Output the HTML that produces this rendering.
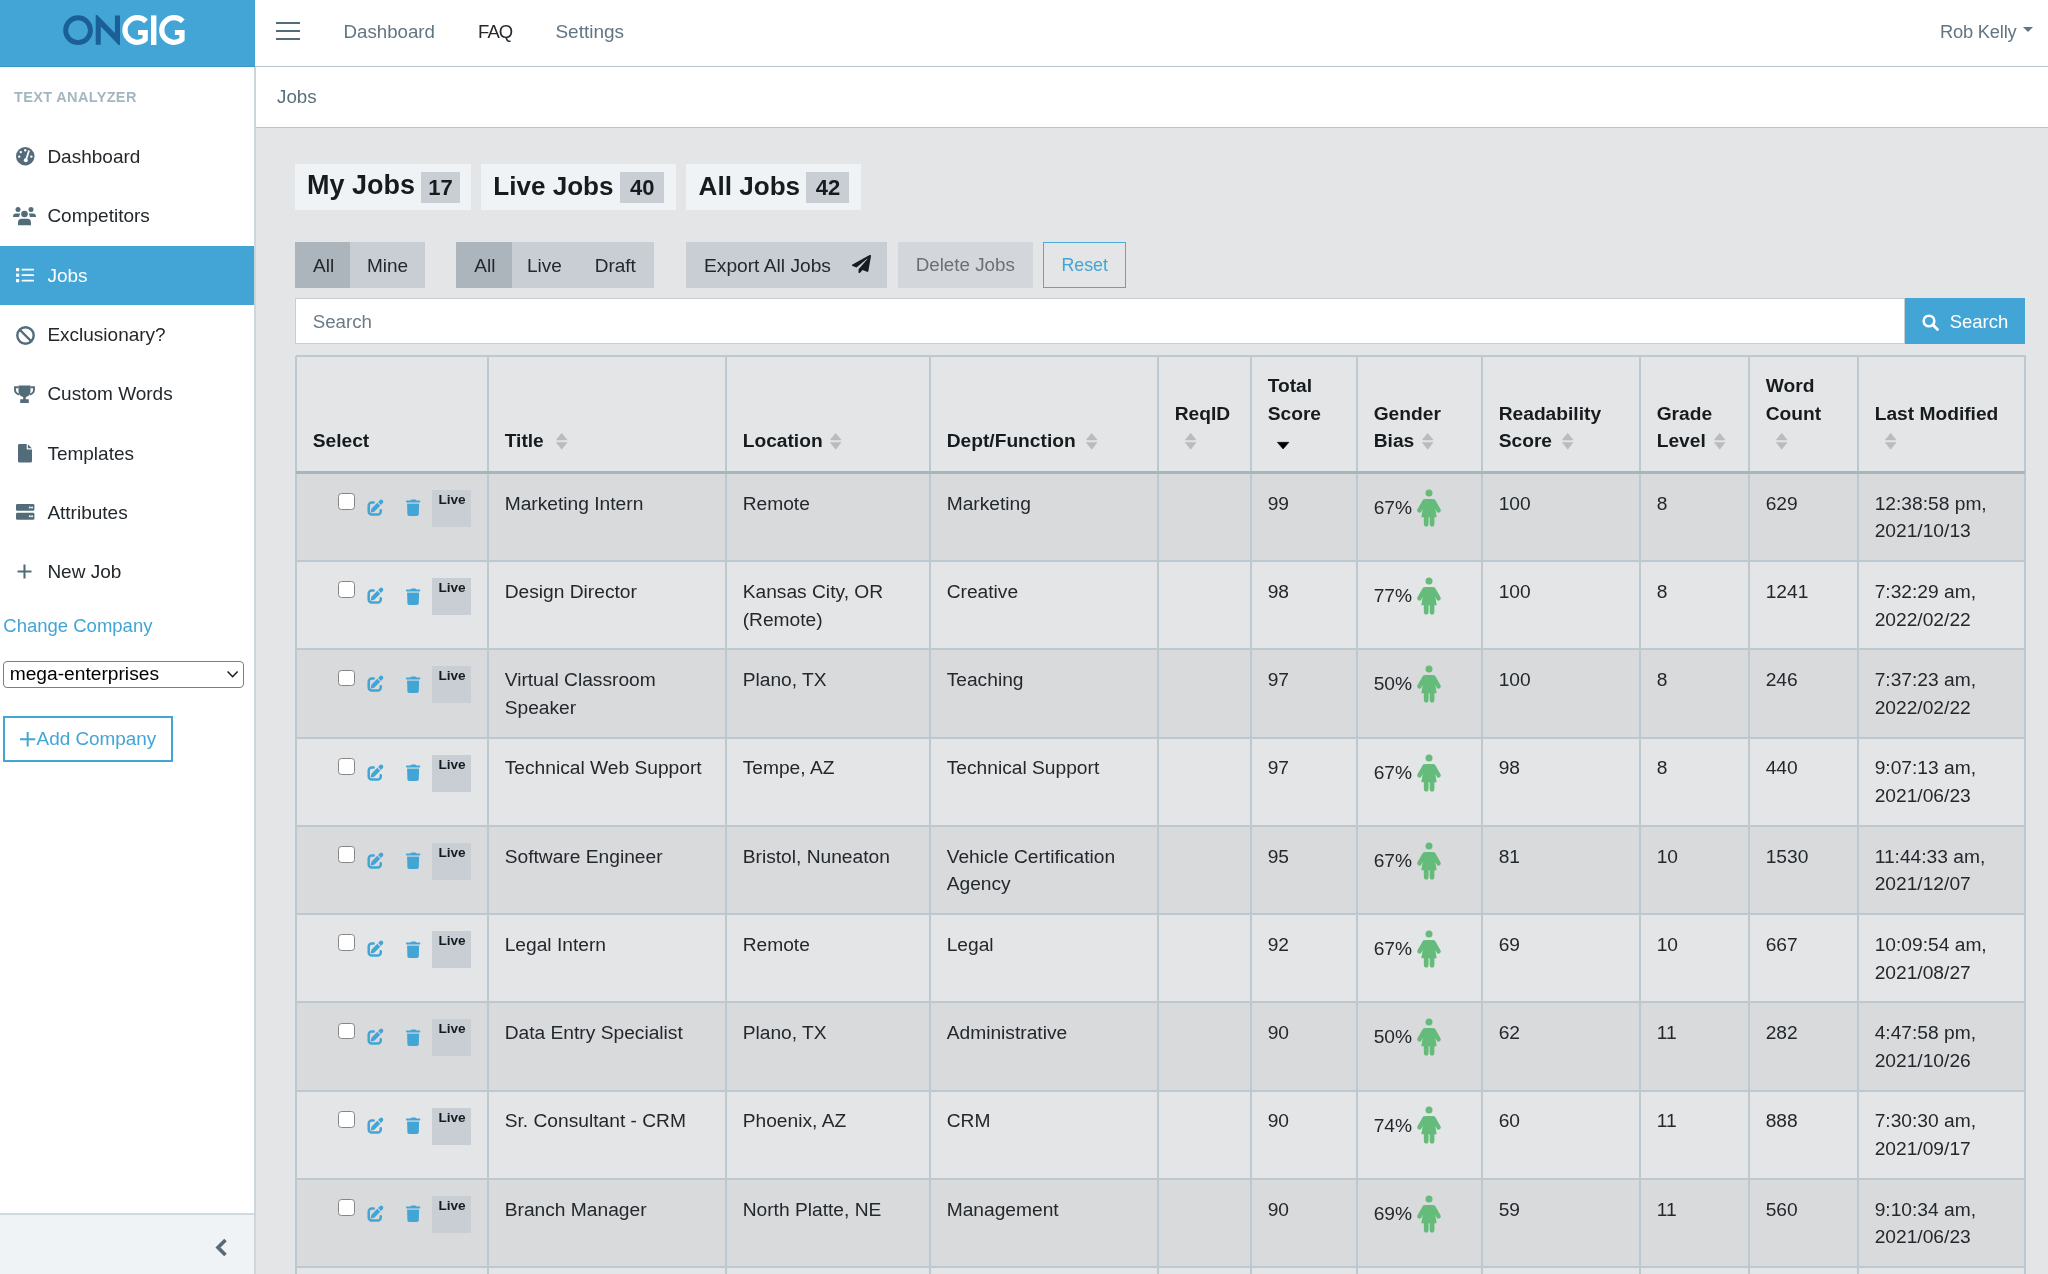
<!DOCTYPE html>
<html><head><meta charset="utf-8"><style>
*{box-sizing:border-box;margin:0;padding:0}
html,body{width:2048px;height:1274px;overflow:hidden}
body{font-family:"Liberation Sans",sans-serif;font-size:18.5px;color:#23282c;background:#e4e5e6;position:relative}
.t{position:absolute;white-space:nowrap;line-height:1}
body{will-change:transform}
.r{position:absolute}
svg{position:absolute;overflow:visible}
</style></head><body>
<div class="r" style="left:0px;top:0px;width:2048px;height:66px;background:#fff;"></div>
<div class="r" style="left:255px;top:66px;width:1793px;height:1px;background:#b9c4cb;"></div>
<div class="r" style="left:0px;top:0px;width:255px;height:67px;background:#42a5d6;"></div>
<div class="r" style="left:0px;top:66px;width:255px;height:1px;background:#3b95c3;"></div>
<svg style="left:0;top:0" width="255" height="66" viewBox="0 0 255 66">
<circle cx="78.05" cy="30.2" r="12.4" fill="none" stroke="#1b5f97" stroke-width="4.95"/>
<path d="M95.7 44.8 V15.1 H97.2 L114.9 32.9 V15.6 H120 V44.9 H118.6 L100.8 26.6 V44.8 Z" fill="#1b5f97"/>
<path d="M147.87 19.43 A14.95 14.95 0 1 0 147.8 40.6 V30.1 H138.1 V35.1 H142.6 V38.1 A9.7 9.7 0 1 1 144.16 23.14 Z" fill="#fff"/>
<path transform="translate(36.8 0)" d="M147.87 19.43 A14.95 14.95 0 1 0 147.8 40.6 V30.1 H138.1 V35.1 H142.6 V38.1 A9.7 9.7 0 1 1 144.16 23.14 Z" fill="#fff"/>
<rect x="151" y="15.4" width="5.4" height="29.6" fill="#fff"/>
</svg>
<div class="r" style="left:276px;top:21.6px;width:24px;height:2.0px;background:#536c79;"></div>
<div class="r" style="left:276px;top:29.6px;width:24px;height:2.0px;background:#536c79;"></div>
<div class="r" style="left:276px;top:38px;width:24px;height:2px;background:#536c79;"></div>
<div class="t" style="left:343.50px;top:22.67px;font-size:18.7px;color:#627583;">Dashboard</div>
<div class="t" style="left:478.00px;top:22.84px;font-size:18.5px;color:#23282c;letter-spacing:-0.9px;">FAQ</div>
<div class="t" style="left:555.40px;top:22.42px;font-size:19px;color:#627583;">Settings</div>
<div class="t" style="left:1940.00px;top:23.01px;font-size:18.3px;color:#627583;letter-spacing:-0.2px;">Rob Kelly</div>
<svg style="left:2023px;top:26.8px" width="10" height="5" viewBox="0 0 10 5"><path d="M0 0H10L5 5Z" fill="#627583"/></svg>
<div class="r" style="left:0px;top:67px;width:255px;height:1207px;background:#fff;"></div>
<div class="r" style="left:254px;top:67px;width:2px;height:1207px;background:#cdd6db;"></div>
<div class="t" style="left:14.00px;top:90.43px;font-size:14.5px;font-weight:700;color:#a4b7c1;letter-spacing:0.35px;">TEXT ANALYZER</div>
<div class="t" style="left:47.40px;top:147.12px;font-size:19px;color:#23282c;">Dashboard</div>
<div class="t" style="left:47.40px;top:206.42px;font-size:19px;color:#23282c;">Competitors</div>
<div class="r" style="left:0px;top:246px;width:254px;height:59px;background:#42a5d6;"></div>
<div class="t" style="left:47.40px;top:265.72px;font-size:19px;color:#fff;">Jobs</div>
<div class="t" style="left:47.40px;top:325.02px;font-size:19px;color:#23282c;">Exclusionary?</div>
<div class="t" style="left:47.40px;top:384.32px;font-size:19px;color:#23282c;">Custom Words</div>
<div class="t" style="left:47.40px;top:443.62px;font-size:19px;color:#23282c;">Templates</div>
<div class="t" style="left:47.40px;top:502.92px;font-size:19px;color:#23282c;">Attributes</div>
<div class="t" style="left:47.40px;top:562.22px;font-size:19px;color:#23282c;">New Job</div>
<svg style="left:15.8px;top:147.4px" width="18.5" height="18.5" viewBox="0 0 18.5 18.5">
<circle cx="9.25" cy="9.25" r="9.25" fill="#536c79"/>
<circle cx="9.25" cy="3.3" r="1.2" fill="#fff"/><circle cx="4.8" cy="5.1" r="1.2" fill="#fff"/><circle cx="3.2" cy="9.6" r="1.2" fill="#fff"/><circle cx="15.3" cy="9.6" r="1.2" fill="#fff"/>
<path d="M12.8 4.2 L10.3 12" stroke="#fff" stroke-width="1.8" stroke-linecap="round"/>
<circle cx="9.8" cy="13.2" r="2" fill="#fff"/>
</svg>
<svg style="left:13.1px;top:206.8px" width="23" height="18.5" viewBox="0 0 23 18.5">
<circle cx="5" cy="2.6" r="2.5" fill="#536c79"/><circle cx="18" cy="2.6" r="2.5" fill="#536c79"/>
<path d="M0 10 Q0 6.6 3 6.6 H7.5 Q6.2 8 6.2 10 Z" fill="#536c79"/>
<path d="M23 10 Q23 6.6 20 6.6 H15.5 Q16.8 8 16.8 10 Z" fill="#536c79"/>
<circle cx="11.5" cy="7" r="3.3" fill="#536c79"/>
<path d="M5 18.3 V15.8 Q5 11.8 8.6 11.8 H14.4 Q18 11.8 18 15.8 V18.3 Z" fill="#536c79"/>
</svg>
<svg style="left:16.2px;top:267.8px" width="18.5" height="15" viewBox="0 0 18.5 15">
<rect x="0" y="0" width="3.2" height="3.2" rx="0.6" fill="#fff"/><rect x="0" y="5.6" width="3.2" height="3.2" rx="0.6" fill="#fff"/><rect x="0" y="11.1" width="3.2" height="3.2" rx="0.6" fill="#fff"/>
<rect x="5.6" y="0.8" width="12.4" height="1.8" rx="0.5" fill="#fff"/><rect x="5.6" y="6.3" width="12.4" height="1.8" rx="0.5" fill="#fff"/><rect x="5.6" y="11.8" width="12.4" height="1.8" rx="0.5" fill="#fff"/>
</svg>
<svg style="left:15.6px;top:325.6px" width="19" height="19" viewBox="0 0 19 19">
<circle cx="9.5" cy="9.5" r="8.2" fill="none" stroke="#536c79" stroke-width="2.4"/>
<path d="M4 4 L15 15" stroke="#536c79" stroke-width="2.4"/>
</svg>
<svg style="left:14.3px;top:384.6px" width="21" height="18.5" viewBox="0 0 21 18.5">
<path d="M4.5 0.5 H16.5 V6 Q16.5 11 11.8 12 V14.2 H14.8 V18 H6.2 V14.2 H9.2 V12 Q4.5 11 4.5 6Z" fill="#536c79"/>
<path d="M4.6 2.2 H1 V4.6 Q1 8.6 5.2 9.6" fill="none" stroke="#536c79" stroke-width="1.9"/>
<path d="M16.4 2.2 H20 V4.6 Q20 8.6 15.8 9.6" fill="none" stroke="#536c79" stroke-width="1.9"/>
</svg>
<svg style="left:18px;top:444px" width="14" height="18.6" viewBox="0 0 14.5 19" preserveAspectRatio="none">
<path d="M1.5 0 H9 V4.8 Q9 5.5 9.7 5.5 H14.5 V17.5 Q14.5 19 13 19 H1.5 Q0 19 0 17.5 V1.5 Q0 0 1.5 0Z" fill="#536c79"/>
<path d="M10.2 0.2 L14.3 4.3 H10.2Z" fill="#536c79"/>
</svg>
<svg style="left:16px;top:504.2px" width="18.4" height="16" viewBox="0 0 19.5 17" preserveAspectRatio="none">
<rect x="0" y="0" width="19.5" height="7.3" rx="1.4" fill="#536c79"/>
<rect x="0" y="9.4" width="19.5" height="7.3" rx="1.4" fill="#536c79"/>
<circle cx="14.6" cy="3.65" r="1" fill="#fff"/><circle cx="17" cy="3.65" r="1" fill="#fff"/>
<circle cx="14.6" cy="13.05" r="1" fill="#fff"/><circle cx="17" cy="13.05" r="1" fill="#fff"/>
</svg>
<svg style="left:17px;top:563.5px" width="15" height="15" viewBox="0 0 15 15">
<path d="M7.5 0.5V14.5M0.5 7.5H14.5" stroke="#536c79" stroke-width="2.1"/>
</svg>
<div class="t" style="left:3.30px;top:616.84px;font-size:18.5px;color:#42a5d6;">Change Company</div>
<div class="r" style="left:3px;top:661px;width:240.5px;height:26.7px;border:1.6px solid #7d7d7d;border-radius:4px;background:#fff"></div>
<div class="t" style="left:9.70px;top:663.95px;font-size:19.2px;color:#000;">mega-enterprises</div>
<svg style="left:226.8px;top:670.9px" width="11.2" height="6.7" viewBox="0 0 11.2 6.7"><path d="M0.6 0.6L5.6 5.8L10.6 0.6" fill="none" stroke="#1a1a1a" stroke-width="1.5"/></svg>
<div class="r" style="left:2.7px;top:716px;width:170px;height:45.8px;border:2px solid #42a5d6"></div>
<svg style="left:20.1px;top:731.9px" width="15.3" height="14.4" viewBox="0 0 15.3 14.4"><path d="M7.65 0V14.4M0 7.2H15.3" stroke="#42a5d6" stroke-width="2"/></svg>
<div class="t" style="left:36.60px;top:729.90px;font-size:18.9px;color:#42a5d6;">Add Company</div>
<div class="r" style="left:0px;top:1213px;width:254px;height:61px;background:#f0f3f5;"></div>
<div class="r" style="left:0px;top:1213px;width:254px;height:2px;background:#cfd9de;"></div>
<svg style="left:215px;top:1238px" width="13" height="19" viewBox="0 0 13 19"><path d="M10.5 2L3 9.5L10.5 17" fill="none" stroke="#536c79" stroke-width="3.6"/></svg>
<div class="r" style="left:256px;top:67px;width:1792px;height:60px;background:#fff;"></div>
<div class="r" style="left:256px;top:127px;width:1792px;height:1px;background:#b9c4cb;"></div>
<div class="t" style="left:277.00px;top:87.89px;font-size:18.8px;color:#5c6f7c;">Jobs</div>
<div class="r" style="left:295px;top:164px;width:176px;height:46px;background:#f0f3f5;"></div>
<div class="t" style="left:307.00px;top:172.44px;font-size:27px;font-weight:700;color:#151b1e;">My Jobs</div>
<div class="r" style="left:421px;top:172px;width:39px;height:31px;background:#c8ced3;"></div>
<div class="t" style="left:421px;width:39px;text-align:center;top:176.68px;font-size:22px;font-weight:700;color:#151b1e">17</div>
<div class="r" style="left:481px;top:164px;width:195px;height:46px;background:#f0f3f5;"></div>
<div class="t" style="left:493.20px;top:173.21px;font-size:26.1px;font-weight:700;color:#151b1e;">Live Jobs</div>
<div class="r" style="left:620.3px;top:172px;width:43.700000000000045px;height:31px;background:#c8ced3;"></div>
<div class="t" style="left:620.3px;width:43.700000000000045px;text-align:center;top:176.68px;font-size:22px;font-weight:700;color:#151b1e">40</div>
<div class="r" style="left:686px;top:164px;width:174.5px;height:46px;background:#f0f3f5;"></div>
<div class="t" style="left:698.60px;top:173.21px;font-size:26.1px;font-weight:700;color:#151b1e;">All Jobs</div>
<div class="r" style="left:806.3px;top:172px;width:43.200000000000045px;height:31px;background:#c8ced3;"></div>
<div class="t" style="left:806.3px;width:43.200000000000045px;text-align:center;top:176.68px;font-size:22px;font-weight:700;color:#151b1e">42</div>
<div class="r" style="left:295px;top:242px;width:55px;height:46px;background:#acb4bc;"></div>
<div class="r" style="left:350px;top:242px;width:74.5px;height:46px;background:#c8ced3;"></div>
<div class="t" style="left:313.00px;top:255.92px;font-size:19px;">All</div>
<div class="t" style="left:367.00px;top:255.92px;font-size:19px;">Mine</div>
<div class="r" style="left:456.3px;top:242px;width:55.30000000000001px;height:46px;background:#acb4bc;"></div>
<div class="r" style="left:511.6px;top:242px;width:142.89999999999998px;height:46px;background:#c8ced3;"></div>
<div class="t" style="left:474.30px;top:255.92px;font-size:19px;">All</div>
<div class="t" style="left:527.00px;top:255.92px;font-size:19px;">Live</div>
<div class="t" style="left:594.70px;top:255.92px;font-size:19px;">Draft</div>
<div class="r" style="left:686px;top:242px;width:201px;height:46px;background:#c8ced3;"></div>
<div class="t" style="left:704.00px;top:255.75px;font-size:19.2px;">Export All Jobs</div>
<svg style="left:851.5px;top:255px" width="19" height="18" viewBox="0 0 512 512" preserveAspectRatio="none"><path d="M476 3.2L12.5 270.6c-18.1 10.4-15.8 35.6 2.2 43.2L121 358.4l287.3-253.2c5.5-4.9 13.3 2.6 8.6 8.3L176 407v80.5c0 23.6 28.5 32.9 42.5 15.8L282 426l124.6 52.2c14.2 6 30.4-2.9 33-18.2l72-432C515 7.8 493.3-6.8 476 3.2z" fill="#151b1e"/></svg>
<div class="r" style="left:898px;top:242px;width:134.70000000000005px;height:46px;background:#d3d6da;"></div>
<div class="t" style="left:915.70px;top:256.09px;font-size:18.8px;color:#6c7075;">Delete Jobs</div>
<div class="r" style="left:1043px;top:242px;width:83.3px;height:46px;border:1.7px solid #4aabd8"></div>
<div class="t" style="left:1061.50px;top:256.93px;font-size:17.8px;color:#42a5d6;">Reset</div>
<div class="r" style="left:295px;top:298px;width:1610px;height:46px;background:#fff;border:1px solid #c8ced3"></div>
<div class="t" style="left:312.70px;top:312.57px;font-size:18.7px;color:#6a7b88;">Search</div>
<div class="r" style="left:1905px;top:298px;width:120.40000000000009px;height:46px;background:#42a5d6;"></div>
<svg style="left:1922px;top:314px" width="17" height="17" viewBox="0 0 17 17"><circle cx="7" cy="7" r="5.3" fill="none" stroke="#fff" stroke-width="2.6"/><path d="M10.8 10.8L15.5 15.5" stroke="#fff" stroke-width="2.8" stroke-linecap="round"/></svg>
<div class="t" style="left:1949.70px;top:312.54px;font-size:18.5px;color:#fff;">Search</div>
<div class="r" style="left:296px;top:355.5px;width:1729px;height:115.5px;background:#e4e5e6;"></div>
<div class="r" style="left:296px;top:473.0px;width:1729px;height:88.25px;background:#d9dadc;"></div>
<div class="r" style="left:296px;top:561.24px;width:1729px;height:88.25px;background:#e4e5e6;"></div>
<div class="r" style="left:296px;top:649.48px;width:1729px;height:88.25px;background:#d9dadc;"></div>
<div class="r" style="left:296px;top:737.72px;width:1729px;height:88.25px;background:#e4e5e6;"></div>
<div class="r" style="left:296px;top:825.96px;width:1729px;height:88.25px;background:#d9dadc;"></div>
<div class="r" style="left:296px;top:914.2px;width:1729px;height:88.25px;background:#e4e5e6;"></div>
<div class="r" style="left:296px;top:1002.4399999999999px;width:1729px;height:88.25000000000011px;background:#d9dadc;"></div>
<div class="r" style="left:296px;top:1090.6799999999998px;width:1729px;height:88.25px;background:#e4e5e6;"></div>
<div class="r" style="left:296px;top:1178.92px;width:1729px;height:88.25px;background:#d9dadc;"></div>
<div class="t" style="left:312.70px;top:431.45px;font-size:19.2px;font-weight:700;color:#151b1e;">Select</div>
<div class="t" style="left:504.70px;top:431.45px;font-size:19.2px;font-weight:700;color:#151b1e;">Title</div>
<svg style="left:555.9px;top:432.5px" width="11.4" height="16.4" viewBox="0 0 11.4 16.4"><path d="M5.7 0.3L11.1 6.9H0.3Z M0.3 9.4H11.1L5.7 16.2Z" fill="#bbbbbb" stroke="#bbbbbb" stroke-width="0.6" stroke-linejoin="round"/></svg>
<div class="t" style="left:742.70px;top:431.45px;font-size:19.2px;font-weight:700;color:#151b1e;">Location</div>
<svg style="left:830.4px;top:432.5px" width="11.4" height="16.4" viewBox="0 0 11.4 16.4"><path d="M5.7 0.3L11.1 6.9H0.3Z M0.3 9.4H11.1L5.7 16.2Z" fill="#bbbbbb" stroke="#bbbbbb" stroke-width="0.6" stroke-linejoin="round"/></svg>
<div class="t" style="left:946.70px;top:431.45px;font-size:19.2px;font-weight:700;color:#151b1e;">Dept/Function</div>
<svg style="left:1086.3px;top:432.5px" width="11.4" height="16.4" viewBox="0 0 11.4 16.4"><path d="M5.7 0.3L11.1 6.9H0.3Z M0.3 9.4H11.1L5.7 16.2Z" fill="#bbbbbb" stroke="#bbbbbb" stroke-width="0.6" stroke-linejoin="round"/></svg>
<div class="t" style="left:1174.70px;top:403.75px;font-size:19.2px;font-weight:700;color:#151b1e;">ReqID</div>
<svg style="left:1184.7px;top:432.5px" width="11.4" height="16.4" viewBox="0 0 11.4 16.4"><path d="M5.7 0.3L11.1 6.9H0.3Z M0.3 9.4H11.1L5.7 16.2Z" fill="#bbbbbb" stroke="#bbbbbb" stroke-width="0.6" stroke-linejoin="round"/></svg>
<div class="t" style="left:1267.70px;top:376.05px;font-size:19.2px;font-weight:700;color:#151b1e;">Total</div>
<div class="t" style="left:1267.70px;top:403.75px;font-size:19.2px;font-weight:700;color:#151b1e;">Score</div>
<svg style="left:1277.4px;top:441.6px" width="12.2" height="7.3" viewBox="0 0 12.2 7.3"><path d="M0.3 0.3H11.9L6.1 7Z" fill="#000" stroke="#000" stroke-width="0.6" stroke-linejoin="round"/></svg>
<div class="t" style="left:1373.70px;top:403.75px;font-size:19.2px;font-weight:700;color:#151b1e;">Gender</div>
<div class="t" style="left:1373.70px;top:431.45px;font-size:19.2px;font-weight:700;color:#151b1e;">Bias</div>
<svg style="left:1422.4px;top:432.5px" width="11.4" height="16.4" viewBox="0 0 11.4 16.4"><path d="M5.7 0.3L11.1 6.9H0.3Z M0.3 9.4H11.1L5.7 16.2Z" fill="#bbbbbb" stroke="#bbbbbb" stroke-width="0.6" stroke-linejoin="round"/></svg>
<div class="t" style="left:1498.70px;top:403.75px;font-size:19.2px;font-weight:700;color:#151b1e;">Readability</div>
<div class="t" style="left:1498.70px;top:431.45px;font-size:19.2px;font-weight:700;color:#151b1e;">Score</div>
<svg style="left:1562.2px;top:432.5px" width="11.4" height="16.4" viewBox="0 0 11.4 16.4"><path d="M5.7 0.3L11.1 6.9H0.3Z M0.3 9.4H11.1L5.7 16.2Z" fill="#bbbbbb" stroke="#bbbbbb" stroke-width="0.6" stroke-linejoin="round"/></svg>
<div class="t" style="left:1656.70px;top:403.75px;font-size:19.2px;font-weight:700;color:#151b1e;">Grade</div>
<div class="t" style="left:1656.70px;top:431.45px;font-size:19.2px;font-weight:700;color:#151b1e;">Level</div>
<svg style="left:1713.9px;top:432.5px" width="11.4" height="16.4" viewBox="0 0 11.4 16.4"><path d="M5.7 0.3L11.1 6.9H0.3Z M0.3 9.4H11.1L5.7 16.2Z" fill="#bbbbbb" stroke="#bbbbbb" stroke-width="0.6" stroke-linejoin="round"/></svg>
<div class="t" style="left:1765.70px;top:376.05px;font-size:19.2px;font-weight:700;color:#151b1e;">Word</div>
<div class="t" style="left:1765.70px;top:403.75px;font-size:19.2px;font-weight:700;color:#151b1e;">Count</div>
<svg style="left:1775.5px;top:432.5px" width="11.4" height="16.4" viewBox="0 0 11.4 16.4"><path d="M5.7 0.3L11.1 6.9H0.3Z M0.3 9.4H11.1L5.7 16.2Z" fill="#bbbbbb" stroke="#bbbbbb" stroke-width="0.6" stroke-linejoin="round"/></svg>
<div class="t" style="left:1874.70px;top:403.75px;font-size:19.2px;font-weight:700;color:#151b1e;">Last Modified</div>
<svg style="left:1884.7px;top:432.5px" width="11.4" height="16.4" viewBox="0 0 11.4 16.4"><path d="M5.7 0.3L11.1 6.9H0.3Z M0.3 9.4H11.1L5.7 16.2Z" fill="#bbbbbb" stroke="#bbbbbb" stroke-width="0.6" stroke-linejoin="round"/></svg>
<div class="r" style="left:338px;top:493.10px;width:17px;height:16.8px;background:#fff;border:1.7px solid #858585;border-radius:3.5px"></div>
<svg style="left:367px;top:499px" width="18" height="18" viewBox="0 0 18 18"><path d="M6.7 3.45 H4.71 A3 3 0 0 0 1.71 6.45 V12.45 A3 3 0 0 0 4.71 15.45 H10.75 A3 3 0 0 0 13.75 12.45 V11.2" fill="none" stroke="#42a5d6" stroke-width="2.5" stroke-linecap="round"/><path d="M4.61 9.41 L10.3 3.7 L13.3 6.7 L7.58 12.38 Q6 13.3 3.7 13.5 Q3.7 11.2 4.61 9.41Z" fill="#42a5d6"/><path d="M11.1 3 L12.8 1.3 A2.05 2.05 0 0 1 15.7 4.2 L14 5.9Z" fill="#42a5d6"/></svg>
<svg style="left:406px;top:499.30px" width="15" height="18" viewBox="0 0 15 18"><path d="M4.4 1.6 Q5 0.6 6 0.6 H9 Q10 0.6 10.6 1.6 H13.4 A0.95 0.95 0 0 1 13.4 3.5 H0.9 A0.95 0.95 0 0 1 0.9 1.6Z" fill="#42a5d6"/><path d="M1.1 4.1H13.1V4.9H1.1Z" fill="#8dc4df"/><path d="M1.1 4.9H13.1L12.8 15.2A1.9 1.9 0 0 1 10.9 17H3.3A1.9 1.9 0 0 1 1.4 15.2Z" fill="#42a5d6"/></svg>
<div class="r" style="left:431.8px;top:489.9px;width:39.39999999999998px;height:37.10000000000002px;background:#c8ced3;"></div>
<div class="t" style="left:438.40px;top:492.89px;font-size:13.6px;font-weight:700;color:#151b1e;">Live</div>
<div class="t" style="left:504.70px;top:493.75px;font-size:19.2px;">Marketing Intern</div>
<div class="t" style="left:742.70px;top:493.75px;font-size:19.2px;">Remote</div>
<div class="t" style="left:946.70px;top:493.75px;font-size:19.2px;">Marketing</div>
<div class="t" style="left:1267.70px;top:493.75px;font-size:19.2px;">99</div>
<div class="t" style="left:1373.70px;top:497.95px;font-size:19.2px;">67%</div>
<svg style="left:1416.6px;top:488.80px" width="24" height="38" viewBox="0 0 24 38"><circle cx="12" cy="4" r="3.5" fill="#64bb7a"/><path d="M7.4 12.6 L2.4 21.4 M16.6 12.6 L21.6 21.4" stroke="#64bb7a" stroke-width="4.4" stroke-linecap="round"/><path d="M8.6 9.9 H15.4 Q17.6 9.9 18.3 12.6 L17.4 14.8 L19.7 28.2 H4.3 L6.6 14.8 L5.7 12.6 Q6.4 9.9 8.6 9.9Z" fill="#64bb7a"/><path d="M6.85 26 H11.55 V35.3 A2.35 2.35 0 0 1 6.85 35.3Z M12.7 26 H17.4 V35.3 A2.35 2.35 0 0 1 12.7 35.3Z" fill="#64bb7a"/></svg>
<div class="t" style="left:1498.70px;top:493.75px;font-size:19.2px;">100</div>
<div class="t" style="left:1656.70px;top:493.75px;font-size:19.2px;">8</div>
<div class="t" style="left:1765.70px;top:493.75px;font-size:19.2px;">629</div>
<div class="t" style="left:1874.70px;top:493.75px;font-size:19.2px;">12:38:58 pm,</div>
<div class="t" style="left:1874.70px;top:521.35px;font-size:19.2px;">2021/10/13</div>
<div class="r" style="left:338px;top:581.34px;width:17px;height:16.8px;background:#fff;border:1.7px solid #858585;border-radius:3.5px"></div>
<svg style="left:367px;top:587px" width="18" height="18" viewBox="0 0 18 18"><path d="M6.7 3.45 H4.71 A3 3 0 0 0 1.71 6.45 V12.45 A3 3 0 0 0 4.71 15.45 H10.75 A3 3 0 0 0 13.75 12.45 V11.2" fill="none" stroke="#42a5d6" stroke-width="2.5" stroke-linecap="round"/><path d="M4.61 9.41 L10.3 3.7 L13.3 6.7 L7.58 12.38 Q6 13.3 3.7 13.5 Q3.7 11.2 4.61 9.41Z" fill="#42a5d6"/><path d="M11.1 3 L12.8 1.3 A2.05 2.05 0 0 1 15.7 4.2 L14 5.9Z" fill="#42a5d6"/></svg>
<svg style="left:406px;top:587.54px" width="15" height="18" viewBox="0 0 15 18"><path d="M4.4 1.6 Q5 0.6 6 0.6 H9 Q10 0.6 10.6 1.6 H13.4 A0.95 0.95 0 0 1 13.4 3.5 H0.9 A0.95 0.95 0 0 1 0.9 1.6Z" fill="#42a5d6"/><path d="M1.1 4.1H13.1V4.9H1.1Z" fill="#8dc4df"/><path d="M1.1 4.9H13.1L12.8 15.2A1.9 1.9 0 0 1 10.9 17H3.3A1.9 1.9 0 0 1 1.4 15.2Z" fill="#42a5d6"/></svg>
<div class="r" style="left:431.8px;top:578.14px;width:39.39999999999998px;height:37.10000000000002px;background:#c8ced3;"></div>
<div class="t" style="left:438.40px;top:581.13px;font-size:13.6px;font-weight:700;color:#151b1e;">Live</div>
<div class="t" style="left:504.70px;top:581.99px;font-size:19.2px;">Design Director</div>
<div class="t" style="left:742.70px;top:581.99px;font-size:19.2px;">Kansas City, OR</div>
<div class="t" style="left:742.70px;top:609.59px;font-size:19.2px;">(Remote)</div>
<div class="t" style="left:946.70px;top:581.99px;font-size:19.2px;">Creative</div>
<div class="t" style="left:1267.70px;top:581.99px;font-size:19.2px;">98</div>
<div class="t" style="left:1373.70px;top:586.19px;font-size:19.2px;">77%</div>
<svg style="left:1416.6px;top:577.04px" width="24" height="38" viewBox="0 0 24 38"><circle cx="12" cy="4" r="3.5" fill="#64bb7a"/><path d="M7.4 12.6 L2.4 21.4 M16.6 12.6 L21.6 21.4" stroke="#64bb7a" stroke-width="4.4" stroke-linecap="round"/><path d="M8.6 9.9 H15.4 Q17.6 9.9 18.3 12.6 L17.4 14.8 L19.7 28.2 H4.3 L6.6 14.8 L5.7 12.6 Q6.4 9.9 8.6 9.9Z" fill="#64bb7a"/><path d="M6.85 26 H11.55 V35.3 A2.35 2.35 0 0 1 6.85 35.3Z M12.7 26 H17.4 V35.3 A2.35 2.35 0 0 1 12.7 35.3Z" fill="#64bb7a"/></svg>
<div class="t" style="left:1498.70px;top:581.99px;font-size:19.2px;">100</div>
<div class="t" style="left:1656.70px;top:581.99px;font-size:19.2px;">8</div>
<div class="t" style="left:1765.70px;top:581.99px;font-size:19.2px;">1241</div>
<div class="t" style="left:1874.70px;top:581.99px;font-size:19.2px;">7:32:29 am,</div>
<div class="t" style="left:1874.70px;top:609.59px;font-size:19.2px;">2022/02/22</div>
<div class="r" style="left:338px;top:669.58px;width:17px;height:16.8px;background:#fff;border:1.7px solid #858585;border-radius:3.5px"></div>
<svg style="left:367px;top:675px" width="18" height="18" viewBox="0 0 18 18"><path d="M6.7 3.45 H4.71 A3 3 0 0 0 1.71 6.45 V12.45 A3 3 0 0 0 4.71 15.45 H10.75 A3 3 0 0 0 13.75 12.45 V11.2" fill="none" stroke="#42a5d6" stroke-width="2.5" stroke-linecap="round"/><path d="M4.61 9.41 L10.3 3.7 L13.3 6.7 L7.58 12.38 Q6 13.3 3.7 13.5 Q3.7 11.2 4.61 9.41Z" fill="#42a5d6"/><path d="M11.1 3 L12.8 1.3 A2.05 2.05 0 0 1 15.7 4.2 L14 5.9Z" fill="#42a5d6"/></svg>
<svg style="left:406px;top:675.78px" width="15" height="18" viewBox="0 0 15 18"><path d="M4.4 1.6 Q5 0.6 6 0.6 H9 Q10 0.6 10.6 1.6 H13.4 A0.95 0.95 0 0 1 13.4 3.5 H0.9 A0.95 0.95 0 0 1 0.9 1.6Z" fill="#42a5d6"/><path d="M1.1 4.1H13.1V4.9H1.1Z" fill="#8dc4df"/><path d="M1.1 4.9H13.1L12.8 15.2A1.9 1.9 0 0 1 10.9 17H3.3A1.9 1.9 0 0 1 1.4 15.2Z" fill="#42a5d6"/></svg>
<div class="r" style="left:431.8px;top:666.38px;width:39.39999999999998px;height:37.10000000000002px;background:#c8ced3;"></div>
<div class="t" style="left:438.40px;top:669.37px;font-size:13.6px;font-weight:700;color:#151b1e;">Live</div>
<div class="t" style="left:504.70px;top:670.23px;font-size:19.2px;">Virtual Classroom</div>
<div class="t" style="left:504.70px;top:697.83px;font-size:19.2px;">Speaker</div>
<div class="t" style="left:742.70px;top:670.23px;font-size:19.2px;">Plano, TX</div>
<div class="t" style="left:946.70px;top:670.23px;font-size:19.2px;">Teaching</div>
<div class="t" style="left:1267.70px;top:670.23px;font-size:19.2px;">97</div>
<div class="t" style="left:1373.70px;top:674.43px;font-size:19.2px;">50%</div>
<svg style="left:1416.6px;top:665.28px" width="24" height="38" viewBox="0 0 24 38"><circle cx="12" cy="4" r="3.5" fill="#64bb7a"/><path d="M7.4 12.6 L2.4 21.4 M16.6 12.6 L21.6 21.4" stroke="#64bb7a" stroke-width="4.4" stroke-linecap="round"/><path d="M8.6 9.9 H15.4 Q17.6 9.9 18.3 12.6 L17.4 14.8 L19.7 28.2 H4.3 L6.6 14.8 L5.7 12.6 Q6.4 9.9 8.6 9.9Z" fill="#64bb7a"/><path d="M6.85 26 H11.55 V35.3 A2.35 2.35 0 0 1 6.85 35.3Z M12.7 26 H17.4 V35.3 A2.35 2.35 0 0 1 12.7 35.3Z" fill="#64bb7a"/></svg>
<div class="t" style="left:1498.70px;top:670.23px;font-size:19.2px;">100</div>
<div class="t" style="left:1656.70px;top:670.23px;font-size:19.2px;">8</div>
<div class="t" style="left:1765.70px;top:670.23px;font-size:19.2px;">246</div>
<div class="t" style="left:1874.70px;top:670.23px;font-size:19.2px;">7:37:23 am,</div>
<div class="t" style="left:1874.70px;top:697.83px;font-size:19.2px;">2022/02/22</div>
<div class="r" style="left:338px;top:757.82px;width:17px;height:16.8px;background:#fff;border:1.7px solid #858585;border-radius:3.5px"></div>
<svg style="left:367px;top:764px" width="18" height="18" viewBox="0 0 18 18"><path d="M6.7 3.45 H4.71 A3 3 0 0 0 1.71 6.45 V12.45 A3 3 0 0 0 4.71 15.45 H10.75 A3 3 0 0 0 13.75 12.45 V11.2" fill="none" stroke="#42a5d6" stroke-width="2.5" stroke-linecap="round"/><path d="M4.61 9.41 L10.3 3.7 L13.3 6.7 L7.58 12.38 Q6 13.3 3.7 13.5 Q3.7 11.2 4.61 9.41Z" fill="#42a5d6"/><path d="M11.1 3 L12.8 1.3 A2.05 2.05 0 0 1 15.7 4.2 L14 5.9Z" fill="#42a5d6"/></svg>
<svg style="left:406px;top:764.02px" width="15" height="18" viewBox="0 0 15 18"><path d="M4.4 1.6 Q5 0.6 6 0.6 H9 Q10 0.6 10.6 1.6 H13.4 A0.95 0.95 0 0 1 13.4 3.5 H0.9 A0.95 0.95 0 0 1 0.9 1.6Z" fill="#42a5d6"/><path d="M1.1 4.1H13.1V4.9H1.1Z" fill="#8dc4df"/><path d="M1.1 4.9H13.1L12.8 15.2A1.9 1.9 0 0 1 10.9 17H3.3A1.9 1.9 0 0 1 1.4 15.2Z" fill="#42a5d6"/></svg>
<div class="r" style="left:431.8px;top:754.62px;width:39.39999999999998px;height:37.10000000000002px;background:#c8ced3;"></div>
<div class="t" style="left:438.40px;top:757.61px;font-size:13.6px;font-weight:700;color:#151b1e;">Live</div>
<div class="t" style="left:504.70px;top:758.47px;font-size:19.2px;">Technical Web Support</div>
<div class="t" style="left:742.70px;top:758.47px;font-size:19.2px;">Tempe, AZ</div>
<div class="t" style="left:946.70px;top:758.47px;font-size:19.2px;">Technical Support</div>
<div class="t" style="left:1267.70px;top:758.47px;font-size:19.2px;">97</div>
<div class="t" style="left:1373.70px;top:762.67px;font-size:19.2px;">67%</div>
<svg style="left:1416.6px;top:753.52px" width="24" height="38" viewBox="0 0 24 38"><circle cx="12" cy="4" r="3.5" fill="#64bb7a"/><path d="M7.4 12.6 L2.4 21.4 M16.6 12.6 L21.6 21.4" stroke="#64bb7a" stroke-width="4.4" stroke-linecap="round"/><path d="M8.6 9.9 H15.4 Q17.6 9.9 18.3 12.6 L17.4 14.8 L19.7 28.2 H4.3 L6.6 14.8 L5.7 12.6 Q6.4 9.9 8.6 9.9Z" fill="#64bb7a"/><path d="M6.85 26 H11.55 V35.3 A2.35 2.35 0 0 1 6.85 35.3Z M12.7 26 H17.4 V35.3 A2.35 2.35 0 0 1 12.7 35.3Z" fill="#64bb7a"/></svg>
<div class="t" style="left:1498.70px;top:758.47px;font-size:19.2px;">98</div>
<div class="t" style="left:1656.70px;top:758.47px;font-size:19.2px;">8</div>
<div class="t" style="left:1765.70px;top:758.47px;font-size:19.2px;">440</div>
<div class="t" style="left:1874.70px;top:758.47px;font-size:19.2px;">9:07:13 am,</div>
<div class="t" style="left:1874.70px;top:786.07px;font-size:19.2px;">2021/06/23</div>
<div class="r" style="left:338px;top:846.06px;width:17px;height:16.8px;background:#fff;border:1.7px solid #858585;border-radius:3.5px"></div>
<svg style="left:367px;top:852px" width="18" height="18" viewBox="0 0 18 18"><path d="M6.7 3.45 H4.71 A3 3 0 0 0 1.71 6.45 V12.45 A3 3 0 0 0 4.71 15.45 H10.75 A3 3 0 0 0 13.75 12.45 V11.2" fill="none" stroke="#42a5d6" stroke-width="2.5" stroke-linecap="round"/><path d="M4.61 9.41 L10.3 3.7 L13.3 6.7 L7.58 12.38 Q6 13.3 3.7 13.5 Q3.7 11.2 4.61 9.41Z" fill="#42a5d6"/><path d="M11.1 3 L12.8 1.3 A2.05 2.05 0 0 1 15.7 4.2 L14 5.9Z" fill="#42a5d6"/></svg>
<svg style="left:406px;top:852.26px" width="15" height="18" viewBox="0 0 15 18"><path d="M4.4 1.6 Q5 0.6 6 0.6 H9 Q10 0.6 10.6 1.6 H13.4 A0.95 0.95 0 0 1 13.4 3.5 H0.9 A0.95 0.95 0 0 1 0.9 1.6Z" fill="#42a5d6"/><path d="M1.1 4.1H13.1V4.9H1.1Z" fill="#8dc4df"/><path d="M1.1 4.9H13.1L12.8 15.2A1.9 1.9 0 0 1 10.9 17H3.3A1.9 1.9 0 0 1 1.4 15.2Z" fill="#42a5d6"/></svg>
<div class="r" style="left:431.8px;top:842.86px;width:39.39999999999998px;height:37.10000000000002px;background:#c8ced3;"></div>
<div class="t" style="left:438.40px;top:845.85px;font-size:13.6px;font-weight:700;color:#151b1e;">Live</div>
<div class="t" style="left:504.70px;top:846.71px;font-size:19.2px;">Software Engineer</div>
<div class="t" style="left:742.70px;top:846.71px;font-size:19.2px;">Bristol, Nuneaton</div>
<div class="t" style="left:946.70px;top:846.71px;font-size:19.2px;">Vehicle Certification</div>
<div class="t" style="left:946.70px;top:874.31px;font-size:19.2px;">Agency</div>
<div class="t" style="left:1267.70px;top:846.71px;font-size:19.2px;">95</div>
<div class="t" style="left:1373.70px;top:850.91px;font-size:19.2px;">67%</div>
<svg style="left:1416.6px;top:841.76px" width="24" height="38" viewBox="0 0 24 38"><circle cx="12" cy="4" r="3.5" fill="#64bb7a"/><path d="M7.4 12.6 L2.4 21.4 M16.6 12.6 L21.6 21.4" stroke="#64bb7a" stroke-width="4.4" stroke-linecap="round"/><path d="M8.6 9.9 H15.4 Q17.6 9.9 18.3 12.6 L17.4 14.8 L19.7 28.2 H4.3 L6.6 14.8 L5.7 12.6 Q6.4 9.9 8.6 9.9Z" fill="#64bb7a"/><path d="M6.85 26 H11.55 V35.3 A2.35 2.35 0 0 1 6.85 35.3Z M12.7 26 H17.4 V35.3 A2.35 2.35 0 0 1 12.7 35.3Z" fill="#64bb7a"/></svg>
<div class="t" style="left:1498.70px;top:846.71px;font-size:19.2px;">81</div>
<div class="t" style="left:1656.70px;top:846.71px;font-size:19.2px;">10</div>
<div class="t" style="left:1765.70px;top:846.71px;font-size:19.2px;">1530</div>
<div class="t" style="left:1874.70px;top:846.71px;font-size:19.2px;">11:44:33 am,</div>
<div class="t" style="left:1874.70px;top:874.31px;font-size:19.2px;">2021/12/07</div>
<div class="r" style="left:338px;top:934.30px;width:17px;height:16.8px;background:#fff;border:1.7px solid #858585;border-radius:3.5px"></div>
<svg style="left:367px;top:940px" width="18" height="18" viewBox="0 0 18 18"><path d="M6.7 3.45 H4.71 A3 3 0 0 0 1.71 6.45 V12.45 A3 3 0 0 0 4.71 15.45 H10.75 A3 3 0 0 0 13.75 12.45 V11.2" fill="none" stroke="#42a5d6" stroke-width="2.5" stroke-linecap="round"/><path d="M4.61 9.41 L10.3 3.7 L13.3 6.7 L7.58 12.38 Q6 13.3 3.7 13.5 Q3.7 11.2 4.61 9.41Z" fill="#42a5d6"/><path d="M11.1 3 L12.8 1.3 A2.05 2.05 0 0 1 15.7 4.2 L14 5.9Z" fill="#42a5d6"/></svg>
<svg style="left:406px;top:940.50px" width="15" height="18" viewBox="0 0 15 18"><path d="M4.4 1.6 Q5 0.6 6 0.6 H9 Q10 0.6 10.6 1.6 H13.4 A0.95 0.95 0 0 1 13.4 3.5 H0.9 A0.95 0.95 0 0 1 0.9 1.6Z" fill="#42a5d6"/><path d="M1.1 4.1H13.1V4.9H1.1Z" fill="#8dc4df"/><path d="M1.1 4.9H13.1L12.8 15.2A1.9 1.9 0 0 1 10.9 17H3.3A1.9 1.9 0 0 1 1.4 15.2Z" fill="#42a5d6"/></svg>
<div class="r" style="left:431.8px;top:931.1px;width:39.39999999999998px;height:37.10000000000002px;background:#c8ced3;"></div>
<div class="t" style="left:438.40px;top:934.09px;font-size:13.6px;font-weight:700;color:#151b1e;">Live</div>
<div class="t" style="left:504.70px;top:934.95px;font-size:19.2px;">Legal Intern</div>
<div class="t" style="left:742.70px;top:934.95px;font-size:19.2px;">Remote</div>
<div class="t" style="left:946.70px;top:934.95px;font-size:19.2px;">Legal</div>
<div class="t" style="left:1267.70px;top:934.95px;font-size:19.2px;">92</div>
<div class="t" style="left:1373.70px;top:939.15px;font-size:19.2px;">67%</div>
<svg style="left:1416.6px;top:930.00px" width="24" height="38" viewBox="0 0 24 38"><circle cx="12" cy="4" r="3.5" fill="#64bb7a"/><path d="M7.4 12.6 L2.4 21.4 M16.6 12.6 L21.6 21.4" stroke="#64bb7a" stroke-width="4.4" stroke-linecap="round"/><path d="M8.6 9.9 H15.4 Q17.6 9.9 18.3 12.6 L17.4 14.8 L19.7 28.2 H4.3 L6.6 14.8 L5.7 12.6 Q6.4 9.9 8.6 9.9Z" fill="#64bb7a"/><path d="M6.85 26 H11.55 V35.3 A2.35 2.35 0 0 1 6.85 35.3Z M12.7 26 H17.4 V35.3 A2.35 2.35 0 0 1 12.7 35.3Z" fill="#64bb7a"/></svg>
<div class="t" style="left:1498.70px;top:934.95px;font-size:19.2px;">69</div>
<div class="t" style="left:1656.70px;top:934.95px;font-size:19.2px;">10</div>
<div class="t" style="left:1765.70px;top:934.95px;font-size:19.2px;">667</div>
<div class="t" style="left:1874.70px;top:934.95px;font-size:19.2px;">10:09:54 am,</div>
<div class="t" style="left:1874.70px;top:962.55px;font-size:19.2px;">2021/08/27</div>
<div class="r" style="left:338px;top:1022.54px;width:17px;height:16.8px;background:#fff;border:1.7px solid #858585;border-radius:3.5px"></div>
<svg style="left:367px;top:1028px" width="18" height="18" viewBox="0 0 18 18"><path d="M6.7 3.45 H4.71 A3 3 0 0 0 1.71 6.45 V12.45 A3 3 0 0 0 4.71 15.45 H10.75 A3 3 0 0 0 13.75 12.45 V11.2" fill="none" stroke="#42a5d6" stroke-width="2.5" stroke-linecap="round"/><path d="M4.61 9.41 L10.3 3.7 L13.3 6.7 L7.58 12.38 Q6 13.3 3.7 13.5 Q3.7 11.2 4.61 9.41Z" fill="#42a5d6"/><path d="M11.1 3 L12.8 1.3 A2.05 2.05 0 0 1 15.7 4.2 L14 5.9Z" fill="#42a5d6"/></svg>
<svg style="left:406px;top:1028.74px" width="15" height="18" viewBox="0 0 15 18"><path d="M4.4 1.6 Q5 0.6 6 0.6 H9 Q10 0.6 10.6 1.6 H13.4 A0.95 0.95 0 0 1 13.4 3.5 H0.9 A0.95 0.95 0 0 1 0.9 1.6Z" fill="#42a5d6"/><path d="M1.1 4.1H13.1V4.9H1.1Z" fill="#8dc4df"/><path d="M1.1 4.9H13.1L12.8 15.2A1.9 1.9 0 0 1 10.9 17H3.3A1.9 1.9 0 0 1 1.4 15.2Z" fill="#42a5d6"/></svg>
<div class="r" style="left:431.8px;top:1019.34px;width:39.39999999999998px;height:37.10000000000002px;background:#c8ced3;"></div>
<div class="t" style="left:438.40px;top:1022.33px;font-size:13.6px;font-weight:700;color:#151b1e;">Live</div>
<div class="t" style="left:504.70px;top:1023.19px;font-size:19.2px;">Data Entry Specialist</div>
<div class="t" style="left:742.70px;top:1023.19px;font-size:19.2px;">Plano, TX</div>
<div class="t" style="left:946.70px;top:1023.19px;font-size:19.2px;">Administrative</div>
<div class="t" style="left:1267.70px;top:1023.19px;font-size:19.2px;">90</div>
<div class="t" style="left:1373.70px;top:1027.39px;font-size:19.2px;">50%</div>
<svg style="left:1416.6px;top:1018.24px" width="24" height="38" viewBox="0 0 24 38"><circle cx="12" cy="4" r="3.5" fill="#64bb7a"/><path d="M7.4 12.6 L2.4 21.4 M16.6 12.6 L21.6 21.4" stroke="#64bb7a" stroke-width="4.4" stroke-linecap="round"/><path d="M8.6 9.9 H15.4 Q17.6 9.9 18.3 12.6 L17.4 14.8 L19.7 28.2 H4.3 L6.6 14.8 L5.7 12.6 Q6.4 9.9 8.6 9.9Z" fill="#64bb7a"/><path d="M6.85 26 H11.55 V35.3 A2.35 2.35 0 0 1 6.85 35.3Z M12.7 26 H17.4 V35.3 A2.35 2.35 0 0 1 12.7 35.3Z" fill="#64bb7a"/></svg>
<div class="t" style="left:1498.70px;top:1023.19px;font-size:19.2px;">62</div>
<div class="t" style="left:1656.70px;top:1023.19px;font-size:19.2px;">11</div>
<div class="t" style="left:1765.70px;top:1023.19px;font-size:19.2px;">282</div>
<div class="t" style="left:1874.70px;top:1023.19px;font-size:19.2px;">4:47:58 pm,</div>
<div class="t" style="left:1874.70px;top:1050.79px;font-size:19.2px;">2021/10/26</div>
<div class="r" style="left:338px;top:1110.78px;width:17px;height:16.8px;background:#fff;border:1.7px solid #858585;border-radius:3.5px"></div>
<svg style="left:367px;top:1117px" width="18" height="18" viewBox="0 0 18 18"><path d="M6.7 3.45 H4.71 A3 3 0 0 0 1.71 6.45 V12.45 A3 3 0 0 0 4.71 15.45 H10.75 A3 3 0 0 0 13.75 12.45 V11.2" fill="none" stroke="#42a5d6" stroke-width="2.5" stroke-linecap="round"/><path d="M4.61 9.41 L10.3 3.7 L13.3 6.7 L7.58 12.38 Q6 13.3 3.7 13.5 Q3.7 11.2 4.61 9.41Z" fill="#42a5d6"/><path d="M11.1 3 L12.8 1.3 A2.05 2.05 0 0 1 15.7 4.2 L14 5.9Z" fill="#42a5d6"/></svg>
<svg style="left:406px;top:1116.98px" width="15" height="18" viewBox="0 0 15 18"><path d="M4.4 1.6 Q5 0.6 6 0.6 H9 Q10 0.6 10.6 1.6 H13.4 A0.95 0.95 0 0 1 13.4 3.5 H0.9 A0.95 0.95 0 0 1 0.9 1.6Z" fill="#42a5d6"/><path d="M1.1 4.1H13.1V4.9H1.1Z" fill="#8dc4df"/><path d="M1.1 4.9H13.1L12.8 15.2A1.9 1.9 0 0 1 10.9 17H3.3A1.9 1.9 0 0 1 1.4 15.2Z" fill="#42a5d6"/></svg>
<div class="r" style="left:431.8px;top:1107.58px;width:39.39999999999998px;height:37.100000000000136px;background:#c8ced3;"></div>
<div class="t" style="left:438.40px;top:1110.57px;font-size:13.6px;font-weight:700;color:#151b1e;">Live</div>
<div class="t" style="left:504.70px;top:1111.43px;font-size:19.2px;">Sr. Consultant - CRM</div>
<div class="t" style="left:742.70px;top:1111.43px;font-size:19.2px;">Phoenix, AZ</div>
<div class="t" style="left:946.70px;top:1111.43px;font-size:19.2px;">CRM</div>
<div class="t" style="left:1267.70px;top:1111.43px;font-size:19.2px;">90</div>
<div class="t" style="left:1373.70px;top:1115.63px;font-size:19.2px;">74%</div>
<svg style="left:1416.6px;top:1106.48px" width="24" height="38" viewBox="0 0 24 38"><circle cx="12" cy="4" r="3.5" fill="#64bb7a"/><path d="M7.4 12.6 L2.4 21.4 M16.6 12.6 L21.6 21.4" stroke="#64bb7a" stroke-width="4.4" stroke-linecap="round"/><path d="M8.6 9.9 H15.4 Q17.6 9.9 18.3 12.6 L17.4 14.8 L19.7 28.2 H4.3 L6.6 14.8 L5.7 12.6 Q6.4 9.9 8.6 9.9Z" fill="#64bb7a"/><path d="M6.85 26 H11.55 V35.3 A2.35 2.35 0 0 1 6.85 35.3Z M12.7 26 H17.4 V35.3 A2.35 2.35 0 0 1 12.7 35.3Z" fill="#64bb7a"/></svg>
<div class="t" style="left:1498.70px;top:1111.43px;font-size:19.2px;">60</div>
<div class="t" style="left:1656.70px;top:1111.43px;font-size:19.2px;">11</div>
<div class="t" style="left:1765.70px;top:1111.43px;font-size:19.2px;">888</div>
<div class="t" style="left:1874.70px;top:1111.43px;font-size:19.2px;">7:30:30 am,</div>
<div class="t" style="left:1874.70px;top:1139.03px;font-size:19.2px;">2021/09/17</div>
<div class="r" style="left:338px;top:1199.02px;width:17px;height:16.8px;background:#fff;border:1.7px solid #858585;border-radius:3.5px"></div>
<svg style="left:367px;top:1205px" width="18" height="18" viewBox="0 0 18 18"><path d="M6.7 3.45 H4.71 A3 3 0 0 0 1.71 6.45 V12.45 A3 3 0 0 0 4.71 15.45 H10.75 A3 3 0 0 0 13.75 12.45 V11.2" fill="none" stroke="#42a5d6" stroke-width="2.5" stroke-linecap="round"/><path d="M4.61 9.41 L10.3 3.7 L13.3 6.7 L7.58 12.38 Q6 13.3 3.7 13.5 Q3.7 11.2 4.61 9.41Z" fill="#42a5d6"/><path d="M11.1 3 L12.8 1.3 A2.05 2.05 0 0 1 15.7 4.2 L14 5.9Z" fill="#42a5d6"/></svg>
<svg style="left:406px;top:1205.22px" width="15" height="18" viewBox="0 0 15 18"><path d="M4.4 1.6 Q5 0.6 6 0.6 H9 Q10 0.6 10.6 1.6 H13.4 A0.95 0.95 0 0 1 13.4 3.5 H0.9 A0.95 0.95 0 0 1 0.9 1.6Z" fill="#42a5d6"/><path d="M1.1 4.1H13.1V4.9H1.1Z" fill="#8dc4df"/><path d="M1.1 4.9H13.1L12.8 15.2A1.9 1.9 0 0 1 10.9 17H3.3A1.9 1.9 0 0 1 1.4 15.2Z" fill="#42a5d6"/></svg>
<div class="r" style="left:431.8px;top:1195.82px;width:39.39999999999998px;height:37.100000000000136px;background:#c8ced3;"></div>
<div class="t" style="left:438.40px;top:1198.81px;font-size:13.6px;font-weight:700;color:#151b1e;">Live</div>
<div class="t" style="left:504.70px;top:1199.67px;font-size:19.2px;">Branch Manager</div>
<div class="t" style="left:742.70px;top:1199.67px;font-size:19.2px;">North Platte, NE</div>
<div class="t" style="left:946.70px;top:1199.67px;font-size:19.2px;">Management</div>
<div class="t" style="left:1267.70px;top:1199.67px;font-size:19.2px;">90</div>
<div class="t" style="left:1373.70px;top:1203.87px;font-size:19.2px;">69%</div>
<svg style="left:1416.6px;top:1194.72px" width="24" height="38" viewBox="0 0 24 38"><circle cx="12" cy="4" r="3.5" fill="#64bb7a"/><path d="M7.4 12.6 L2.4 21.4 M16.6 12.6 L21.6 21.4" stroke="#64bb7a" stroke-width="4.4" stroke-linecap="round"/><path d="M8.6 9.9 H15.4 Q17.6 9.9 18.3 12.6 L17.4 14.8 L19.7 28.2 H4.3 L6.6 14.8 L5.7 12.6 Q6.4 9.9 8.6 9.9Z" fill="#64bb7a"/><path d="M6.85 26 H11.55 V35.3 A2.35 2.35 0 0 1 6.85 35.3Z M12.7 26 H17.4 V35.3 A2.35 2.35 0 0 1 12.7 35.3Z" fill="#64bb7a"/></svg>
<div class="t" style="left:1498.70px;top:1199.67px;font-size:19.2px;">59</div>
<div class="t" style="left:1656.70px;top:1199.67px;font-size:19.2px;">11</div>
<div class="t" style="left:1765.70px;top:1199.67px;font-size:19.2px;">560</div>
<div class="t" style="left:1874.70px;top:1199.67px;font-size:19.2px;">9:10:34 am,</div>
<div class="t" style="left:1874.70px;top:1227.27px;font-size:19.2px;">2021/06/23</div>
<div class="r" style="left:295.5px;top:355.0px;width:1730.0px;height:1.5px;background:#bdc9d0;"></div>
<div class="r" style="left:295px;top:355.5px;width:2px;height:918.5px;background:#bdc9d0;"></div>
<div class="r" style="left:487px;top:355.5px;width:2px;height:918.5px;background:#bdc9d0;"></div>
<div class="r" style="left:725px;top:355.5px;width:2px;height:918.5px;background:#bdc9d0;"></div>
<div class="r" style="left:929px;top:355.5px;width:2px;height:918.5px;background:#bdc9d0;"></div>
<div class="r" style="left:1157px;top:355.5px;width:2px;height:918.5px;background:#bdc9d0;"></div>
<div class="r" style="left:1250px;top:355.5px;width:2px;height:918.5px;background:#bdc9d0;"></div>
<div class="r" style="left:1356px;top:355.5px;width:2px;height:918.5px;background:#bdc9d0;"></div>
<div class="r" style="left:1481px;top:355.5px;width:2px;height:918.5px;background:#bdc9d0;"></div>
<div class="r" style="left:1639px;top:355.5px;width:2px;height:918.5px;background:#bdc9d0;"></div>
<div class="r" style="left:1748px;top:355.5px;width:2px;height:918.5px;background:#bdc9d0;"></div>
<div class="r" style="left:1857px;top:355.5px;width:2px;height:918.5px;background:#bdc9d0;"></div>
<div class="r" style="left:2024px;top:355.5px;width:2px;height:918.5px;background:#bdc9d0;"></div>
<div class="r" style="left:296px;top:471px;width:1729px;height:3px;background:#a7b5bd;"></div>
<div class="r" style="left:296px;top:560.24px;width:1729px;height:2.0px;background:#bdc9d0;"></div>
<div class="r" style="left:296px;top:648.48px;width:1729px;height:2.0px;background:#bdc9d0;"></div>
<div class="r" style="left:296px;top:736.72px;width:1729px;height:2.0px;background:#bdc9d0;"></div>
<div class="r" style="left:296px;top:824.96px;width:1729px;height:2.0px;background:#bdc9d0;"></div>
<div class="r" style="left:296px;top:913.2px;width:1729px;height:2.0px;background:#bdc9d0;"></div>
<div class="r" style="left:296px;top:1001.44px;width:1729px;height:2.0px;background:#bdc9d0;"></div>
<div class="r" style="left:296px;top:1089.68px;width:1729px;height:2.0px;background:#bdc9d0;"></div>
<div class="r" style="left:296px;top:1177.92px;width:1729px;height:2.0px;background:#bdc9d0;"></div>
<div class="r" style="left:296px;top:1266.16px;width:1729px;height:2.0px;background:#bdc9d0;"></div>
</body></html>
